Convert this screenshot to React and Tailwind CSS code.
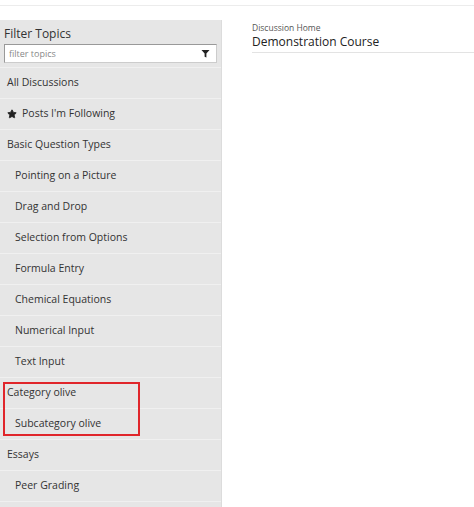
import { Star } from "lucide-react";

const topics = [
  { name: "All Discussions" },
  { name: "Posts I'm Following", star: true },
  { name: "Basic Question Types" },
  { name: "Pointing on a Picture", sub: true },
  { name: "Drag and Drop", sub: true },
  { name: "Selection from Options", sub: true },
  { name: "Formula Entry", sub: true },
  { name: "Chemical Equations", sub: true },
  { name: "Numerical Input", sub: true },
  { name: "Text Input", sub: true },
  { name: "Category olive" },
  { name: "Subcategory olive", sub: true },
  { name: "Essays" },
  { name: "Peer Grading", sub: true },
  { name: "" },
];

function FilterIcon() {
  return (
    <svg width="9" height="9" viewBox="0 0 10 10" className="shrink-0">
      <path d="M0.5 1 H9.5 L6 5 V9.5 L4 8.5 V5 Z" fill="#222" />
    </svg>
  );
}

export default function App() {
  return (
    <div
      className="relative h-[507px] w-[474px] overflow-hidden bg-white text-[#333]"
      style={{ fontFamily: '"Open Sans", "Liberation Sans", sans-serif' }}
    >
      <div className="h-[6px] border-b border-[#ececec]" />
      <div className="flex gap-[30px] pt-[14px]">
        {/* Sidebar */}
        <div className="w-[222px] shrink-0 border-r border-[#dcdcdc] bg-[#e6e6e6]">
          <div className="px-[4px] pt-[4px] text-[12px] leading-[20px] text-[#333]">
            Filter Topics
          </div>
          <div className="px-[4px] pb-[4px]">
            <div className="flex h-[19px] items-center border border-[#ccc] border-t-[#999] border-l-[#999] bg-white pl-[4px] pr-[6px]">
              <span className="flex-1 text-[9px] text-[#888]">filter topics</span>
              <FilterIcon />
            </div>
          </div>
          <div className="border-t border-[#f0f0f0]">
            {topics.map((t, i) => (
              <div
                key={i}
                className={`flex h-[31px] items-center border-b border-[#f0f0f0] text-[10.5px] text-[#333] ${
                  t.sub ? "pl-[15px]" : "pl-[7px]"
                }`}
              >
                {t.star && (
                  <Star size={10} fill="#222" stroke="#222" className="mr-[5px]" />
                )}
                {t.name}
              </div>
            ))}
          </div>
        </div>

        {/* Main */}
        <div className="flex-1">
          <div className="border-b border-[#e3e3e3] pb-[2px] pt-[2px]">
            <div className="text-[8.5px] leading-[12px] text-[#555]">Discussion Home</div>
            <div className="text-[12px] leading-[16px] text-[#222]">Demonstration Course</div>
          </div>
        </div>
      </div>

      {/* Highlight box */}
      <div className="pointer-events-none absolute left-[3px] top-[382px] h-[54px] w-[137px] border-2 border-[#e0262b]" />
    </div>
  );
}
